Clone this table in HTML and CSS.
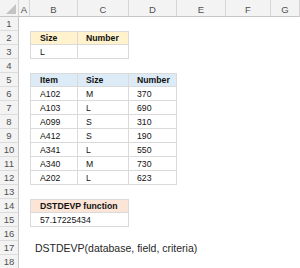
FILE: index.html
```html
<!DOCTYPE html>
<html lang="en">
<head>
    <meta charset="UTF-8">
    <title>DSTDEVP function</title>
    <link rel="stylesheet" href="styles.css">
</head>
<body>
    <div class="sheet">
        <div class="row head-row">
            <div class="corner"><span class="corner-mark"></span></div>
            <div class="col-head">A</div>
            <div class="col-head">B</div>
            <div class="col-head">C</div>
            <div class="col-head">D</div>
            <div class="col-head">E</div>
            <div class="col-head">F</div>
            <div class="col-head">G</div>
        </div>

        <div class="row"><div class="row-head">1</div></div>

        <div class="row">
            <div class="row-head">2</div><div></div>
            <div class="cell t t-top t-left crit">Size</div>
            <div class="cell t t-top crit">Number</div>
        </div>
        <div class="row">
            <div class="row-head">3</div><div></div>
            <div class="cell t t-left">L</div>
            <div class="cell t"></div>
        </div>

        <div class="row"><div class="row-head">4</div></div>

        <div class="row">
            <div class="row-head">5</div><div></div>
            <div class="cell t t-top t-left db">Item</div>
            <div class="cell t t-top db">Size</div>
            <div class="cell t t-top db">Number</div>
        </div>
        <div class="row">
            <div class="row-head">6</div><div></div>
            <div class="cell t t-left">A102</div><div class="cell t">M</div><div class="cell t">370</div>
        </div>
        <div class="row">
            <div class="row-head">7</div><div></div>
            <div class="cell t t-left">A103</div><div class="cell t">L</div><div class="cell t">690</div>
        </div>
        <div class="row">
            <div class="row-head">8</div><div></div>
            <div class="cell t t-left">A099</div><div class="cell t">S</div><div class="cell t">310</div>
        </div>
        <div class="row">
            <div class="row-head">9</div><div></div>
            <div class="cell t t-left">A412</div><div class="cell t">S</div><div class="cell t">190</div>
        </div>
        <div class="row">
            <div class="row-head">10</div><div></div>
            <div class="cell t t-left">A341</div><div class="cell t">L</div><div class="cell t">550</div>
        </div>
        <div class="row">
            <div class="row-head">11</div><div></div>
            <div class="cell t t-left">A340</div><div class="cell t">M</div><div class="cell t">730</div>
        </div>
        <div class="row">
            <div class="row-head">12</div><div></div>
            <div class="cell t t-left">A202</div><div class="cell t">L</div><div class="cell t">623</div>
        </div>

        <div class="row"><div class="row-head">13</div></div>

        <div class="row">
            <div class="row-head">14</div><div></div>
            <div class="cell t t-top t-left result wide">DSTDEVP function</div>
        </div>
        <div class="row">
            <div class="row-head">15</div><div></div>
            <div class="cell t t-left wide">57.17225434</div>
        </div>

        <div class="row"><div class="row-head">16</div></div>
        <div class="row">
            <div class="row-head">17</div><div></div>
            <div class="syntax">DSTDEVP(database, field, criteria)</div>
        </div>
        <div class="row"><div class="row-head">18</div></div>
    </div>
</body>
</html>
```

FILE: styles.css
```css
* {
    margin: 0;
    padding: 0;
    box-sizing: border-box;
}

body {
    background: #ffffff;
    font-family: 'Liberation Sans', Arial, sans-serif;
    overflow: hidden;
}

.sheet {
    width: 300px;
}

.row {
    display: grid;
    grid-template-columns: 19px 11px 48px 51px 48px 49px 45px 1fr;
    height: 14px;
}

.head-row {
    height: 17px;
}

.corner,
.col-head {
    background: #f3f3f3;
    border-right: 1px solid #d6d6d6;
    border-bottom: 1px solid #c6c6c6;
}

.corner {
    display: flex;
    justify-content: flex-end;
    align-items: flex-end;
    padding: 0 2px 2px 0;
}

.corner-mark {
    width: 0;
    height: 0;
    border-left: 10px solid transparent;
    border-bottom: 10px solid #c4c4c4;
}

.col-head {
    display: flex;
    justify-content: center;
    align-items: flex-end;
    padding-bottom: 1px;
    font-size: 9.5px;
    color: #505050;
}

.row-head {
    background: #f3f3f3;
    border-right: 1px solid #c6c6c6;
    border-bottom: 1px solid #dcdcdc;
    display: flex;
    justify-content: center;
    align-items: center;
    font-size: 9.5px;
    color: #505050;
}

.cell {
    display: flex;
    align-items: center;
    padding-left: 8px;
    font-size: 8.7px;
    color: #111111;
    white-space: nowrap;
}

.t {
    border-right: 1px solid #dadada;
    border-bottom: 1px solid #dadada;
}

.t-top {
    border-top: 1px solid #dadada;
    font-weight: bold;
}

.t-left {
    border-left: 1px solid #dadada;
    padding-left: 9px;
}

.crit {
    background: #fff2cc;
}

.db {
    background: #ddebf7;
}

.result {
    background: #fce4d6;
}

.wide {
    grid-column: span 2;
}

.syntax {
    grid-column: span 4;
    display: flex;
    align-items: center;
    padding-left: 5px;
    font-size: 10.5px;
    color: #262626;
    white-space: nowrap;
}
```
